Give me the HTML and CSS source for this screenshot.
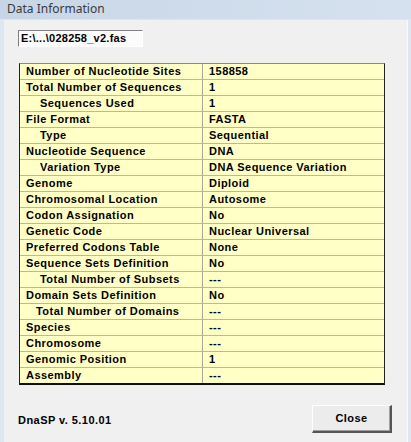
FILE: index.html
```html
<!DOCTYPE html>
<html>
<head>
<meta charset="utf-8">
<link rel="stylesheet" href="styles.css">
</head>
<body>
<div class="window">
  <div class="titlebar">Data Information</div>
  <div class="frame">
    <div class="content">
      <div class="pathbox">E:\...\028258_v2.fas</div>
      <div class="grid">
        <div class="lbl">Number of Nucleotide Sites</div><div class="val">158858</div>
        <div class="lbl">Total Number of Sequences</div><div class="val">1</div>
        <div class="lbl ind">Sequences Used</div><div class="val">1</div>
        <div class="lbl">File Format</div><div class="val">FASTA</div>
        <div class="lbl ind">Type</div><div class="val">Sequential</div>
        <div class="lbl">Nucleotide Sequence</div><div class="val">DNA</div>
        <div class="lbl ind">Variation Type</div><div class="val">DNA Sequence Variation</div>
        <div class="lbl">Genome</div><div class="val">Diploid</div>
        <div class="lbl">Chromosomal Location</div><div class="val">Autosome</div>
        <div class="lbl">Codon Assignation</div><div class="val">No</div>
        <div class="lbl">Genetic Code</div><div class="val">Nuclear Universal</div>
        <div class="lbl">Preferred Codons Table</div><div class="val">None</div>
        <div class="lbl">Sequence Sets Definition</div><div class="val">No</div>
        <div class="lbl ind">Total Number of Subsets</div><div class="val">---</div>
        <div class="lbl">Domain Sets Definition</div><div class="val">No</div>
        <div class="lbl ind2">Total Number of Domains</div><div class="val">---</div>
        <div class="lbl">Species</div><div class="val">---</div>
        <div class="lbl">Chromosome</div><div class="val">---</div>
        <div class="lbl">Genomic Position</div><div class="val">1</div>
        <div class="lbl last">Assembly</div><div class="val last">---</div>
      </div>
      <div class="footer">
        <div class="version">DnaSP v. 5.10.01</div>
        <div class="btn">Close</div>
      </div>
    </div>
  </div>
</div>
</body>
</html>
```
FILE: styles.css
```css
html, body {
  margin: 0;
  padding: 0;
}
body {
  width: 411px;
  height: 442px;
  overflow: hidden;
  background: #f0f0f0;
  font-family: "Liberation Sans", Arial, sans-serif;
}
.window {
  width: 411px;
  height: 442px;
  display: flex;
  flex-direction: column;
}
.titlebar {
  height: 19px;
  line-height: 17px;
  padding-left: 7px;
  font-family: "Noto Sans", "Open Sans", sans-serif;
  font-size: 12px;
  color: #3a3a3a;
  background: linear-gradient(to right, #c7d6e6 0%, #cfdceb 50%, #d5e1ee 100%);
  border-bottom: 1px solid #dde6ef;
}
.frame {
  flex: 1;
  display: flex;
  border-left: 4px solid #dde7f1;
  border-right: 3px solid #dde7f1;
}
.content {
  flex: 1;
  background: #f0f0f0;
  display: flex;
  flex-direction: column;
  padding-left: 14px;
  border-right: 1px solid #fafafa;
}
.pathbox {
  margin-top: 10px;
  width: 121px;
  height: 15px;
  line-height: 15px;
  padding-left: 2px;
  font-size: 11px;
  font-weight: bold;
  letter-spacing: 0.25px;
  color: #000;
  background: #fbfbfb;
  border-top: 1px solid #808080;
  border-left: 1px solid #808080;
  border-bottom: 1px solid #ffffff;
  border-right: 1px solid #ffffff;
}
.grid {
  margin-top: 16px;
  margin-left: 1px;
  width: 364px;
  display: grid;
  grid-template-columns: 183px 181px;
  background: #ffffc6;
  border-top: 1px solid #8a8a80;
  border-left: 1px solid #222;
  border-right: 1px solid #222;
  border-bottom: 2px solid #111;
}
.lbl, .val {
  height: 15px;
  line-height: 15px;
  font-size: 11px;
  font-weight: bold;
  letter-spacing: 0.45px;
  color: #000;
  white-space: nowrap;
  border-bottom: 1px solid #b8b8a4;
}
.lbl {
  padding-left: 6px;
  border-right: 1px solid #a8a898;
}
.val {
  padding-left: 6px;
}
.lbl.ind {
  padding-left: 20px;
}
.lbl.ind2 {
  padding-left: 16px;
}
.lbl.last, .val.last {
  border-bottom: none;
}
.footer {
  flex: 1;
  display: flex;
  align-items: center;
  justify-content: space-between;
  padding-right: 15px;
}
.version {
  font-size: 11px;
  font-weight: bold;
  letter-spacing: 0.45px;
  color: #000;
  padding-top: 13px;
}
.btn {
  width: 77px;
  height: 25px;
  line-height: 25px;
  margin-top: 11px;
  text-align: center;
  font-size: 11px;
  font-weight: bold;
  letter-spacing: 0.45px;
  color: #000;
  background: #ececec;
  border-top: 1px solid #ffffff;
  border-left: 1px solid #ffffff;
  border-right: 2px solid #555;
  border-bottom: 2px solid #555;
  box-shadow: inset -1px -1px 0 #a0a0a0;
}
```
